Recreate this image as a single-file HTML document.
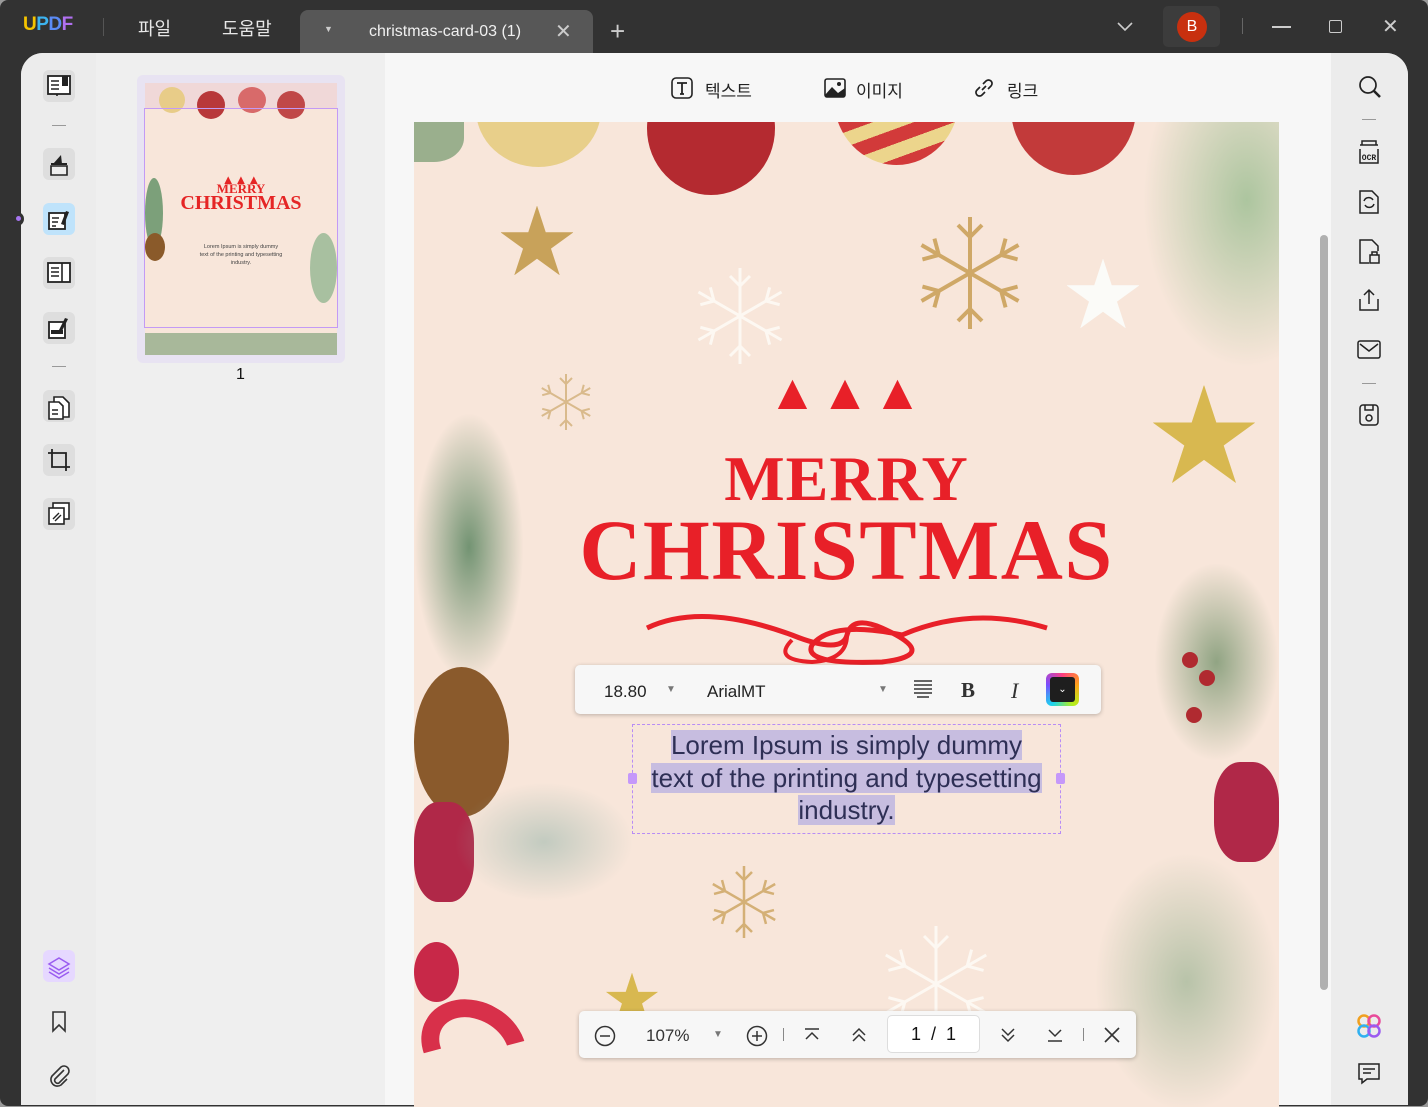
<!DOCTYPE html>
<html><head><meta charset="utf-8"><style>
*{margin:0;padding:0;box-sizing:border-box}
body{width:1428px;height:1107px;background:#9a9a9a;font-family:"Liberation Sans","Noto Sans CJK KR",sans-serif;position:relative;overflow:hidden}
.win{position:absolute;left:0;top:0;width:1428px;height:1106px;background:#323232;border-radius:8px 8px 8px 8px}
.abs{position:absolute}
.ic{position:absolute;width:32px;height:32px;border-radius:6px;background:#dedede}
.sep{position:absolute;width:14px;height:1px;background:#999}
svg{overflow:visible}
</style></head><body>
<div class="win"></div>
<!-- title bar -->
<div class="abs" style="left:23px;top:14px;font-weight:bold;font-size:19px;letter-spacing:-0.5px"><span style="color:#f5c400">U</span><span style="color:#3cb3f0">P</span><span style="color:#5b8bf5">D</span><span style="color:#b070f0">F</span></div>
<div class="abs" style="left:103px;top:18px;width:1px;height:18px;background:#555"></div>
<div class="abs" style="left:138px;top:15px;color:#e8e8e8;font-size:18px">파일</div>
<div class="abs" style="left:222px;top:15px;color:#e8e8e8;font-size:18px">도움말</div>
<div class="abs" style="left:300px;top:10px;width:293px;height:44px;background:#575757;border-radius:8px 8px 0 0"></div>
<div class="abs" style="left:324px;top:24px;color:#ccc;font-size:9px">▼</div>
<div class="abs" style="left:369px;top:23px;color:#f0f0f0;font-size:16px">christmas-card-03 (1)</div>
<div class="abs" style="left:555px;top:19px;color:#ccc;font-size:20px">✕</div>
<div class="abs" style="left:610px;top:16px;color:#ccc;font-size:26px;font-weight:300">+</div>
<svg class="abs" style="left:1117px;top:22px" width="16" height="10"><path d="M1 1 L8 8 L15 1" stroke="#ccc" stroke-width="1.6" fill="none"/></svg>
<div class="abs" style="left:1163px;top:6px;width:57px;height:41px;background:#3c3c3c;border-radius:5px"></div>
<div class="abs" style="left:1177px;top:12px;width:30px;height:30px;border-radius:50%;background:#c8300f;color:#fff;font-size:16px;text-align:center;line-height:30px">B</div>
<div class="abs" style="left:1242px;top:18px;width:1px;height:16px;background:#666"></div>
<div class="abs" style="left:1272px;top:26px;width:19px;height:1.5px;background:#ccc"></div>
<div class="abs" style="left:1329px;top:20px;width:13px;height:13px;border:1.5px solid #ccc;border-radius:2px"></div>
<div class="abs" style="left:1382px;top:14px;color:#ccc;font-size:20px">✕</div>

<!-- main content -->
<div class="abs" style="left:21px;top:53px;width:1387px;height:1052px;background:#f7f7f7;border-radius:22px 22px 0 0;overflow:hidden">
 <div class="abs" style="left:0;top:0;width:75px;height:1052px;background:#ececec"></div>
 <div class="abs" style="left:75px;top:0;width:289px;height:1052px;background:#efefef"></div>
 <div class="abs" style="left:1310px;top:0;width:77px;height:1052px;background:#ececec"></div>
</div>
<div class="abs" style="left:16px;top:212px;width:8px;height:14px;background:#323232;border-radius:0 8px 8px 0"></div>
<div class="abs" style="left:16px;top:216px;width:5px;height:5px;border-radius:50%;background:#a675f0"></div>

<!-- left icons -->
<div class="ic" style="left:43px;top:70px"></div>
<svg class="abs" style="left:47px;top:75px" width="24" height="22"><rect x="1" y="1" width="22" height="18" fill="#fff" stroke="#222" stroke-width="1.8"/><rect x="15" y="1" width="6" height="10" fill="#222"/><path d="M4 6h8M4 10h8M4 14h8M10 19v2" stroke="#222" stroke-width="1.6"/></svg>
<div class="sep" style="left:52px;top:125px"></div>
<div class="ic" style="left:43px;top:148px"></div>
<svg class="abs" style="left:48px;top:152px" width="22" height="24"><path d="M5 12 L13 3 L14 12 Z" fill="#222"/><path d="M3 14h16v9H3z" fill="#eee" stroke="#222" stroke-width="1.6"/><path d="M3 12h16" stroke="#222" stroke-width="2"/></svg>
<div class="ic" style="left:43px;top:203px;background:#bfe3fb"></div>
<svg class="abs" style="left:47px;top:207px" width="24" height="24"><rect x="2" y="6" width="16" height="16" fill="#fff" stroke="#222" stroke-width="1.8"/><path d="M5 11h7M5 15h6M5 19h4" stroke="#222" stroke-width="1.6"/><path d="M14 17 L19 4 L22 5 L17 18 Z" fill="#222"/></svg>
<div class="ic" style="left:43px;top:257px"></div>
<svg class="abs" style="left:47px;top:262px" width="24" height="22"><rect x="1" y="1" width="22" height="19" fill="#fff" stroke="#222" stroke-width="1.8"/><path d="M15 1v19M4 6h8M4 10h8M4 14h8" stroke="#222" stroke-width="1.6"/></svg>
<div class="ic" style="left:43px;top:312px"></div>
<svg class="abs" style="left:47px;top:316px" width="24" height="24"><rect x="2" y="6" width="16" height="16" fill="#fff" stroke="#222" stroke-width="1.8"/><rect x="4" y="14" width="12" height="4" fill="#222"/><path d="M12 14 L18 2 L21 3 L15 15 Z" fill="#222"/></svg>
<div class="sep" style="left:52px;top:366px"></div>
<div class="ic" style="left:43px;top:390px"></div>
<svg class="abs" style="left:48px;top:396px" width="22" height="24"><path d="M6 1h9l6 6v14H6z" fill="#fff" stroke="#222" stroke-width="1.6"/><path d="M1 6h10l4 4v13H1z" fill="#fff" stroke="#222" stroke-width="1.6"/><path d="M4 14h6M4 18h6" stroke="#222" stroke-width="1.4"/></svg>
<div class="ic" style="left:43px;top:444px"></div>
<svg class="abs" style="left:47px;top:448px" width="24" height="24"><path d="M5 1v18h18M1 5h18v18" stroke="#222" stroke-width="1.8" fill="none"/></svg>
<div class="ic" style="left:43px;top:498px"></div>
<svg class="abs" style="left:47px;top:502px" width="24" height="24"><rect x="6" y="1" width="16" height="16" fill="#fff" stroke="#222" stroke-width="1.6"/><rect x="2" y="6" width="15" height="16" fill="#fff" stroke="#222" stroke-width="1.6"/><path d="M6 17l6-6M8 19l6-6" stroke="#222" stroke-width="1.4"/></svg>
<div class="ic" style="left:43px;top:950px;background:#e6d8ff"></div>
<svg class="abs" style="left:48px;top:956px" width="22" height="22"><path d="M11 2 L21 8 L11 14 L1 8 Z" fill="none" stroke="#9a5cf0" stroke-width="1.5"/><path d="M1 12l10 6 10-6M1 16l10 6 10-6" fill="none" stroke="#9a5cf0" stroke-width="1.5"/></svg>
<svg class="abs" style="left:51px;top:1011px" width="16" height="22"><path d="M2 1h12v19l-6-6-6 6z" fill="none" stroke="#333" stroke-width="1.6"/></svg>
<svg class="abs" style="left:49px;top:1064px" width="22" height="24"><path d="M15 6 L6 15 a3 3 0 0 0 4 4 L19 10 a5 5 0 0 0 -7 -7 L3 12 a6.5 6.5 0 0 0 9 9 L18 15" fill="none" stroke="#333" stroke-width="1.6"/></svg>

<!-- thumbnail -->
<div class="abs" style="left:137px;top:75px;width:208px;height:288px;background:#e8e3f2;border-radius:6px"></div>
<div class="abs" style="left:145px;top:83px;width:192px;height:272px;background:#f8e6da;overflow:hidden">
 <div class="abs" style="left:0;top:0;width:192px;height:26px;background:#f0d8d8"></div>
 <div class="abs" style="left:14px;top:4px;width:26px;height:26px;border-radius:50%;background:#e8cc88"></div>
 <div class="abs" style="left:52px;top:8px;width:28px;height:28px;border-radius:50%;background:#b8383a"></div>
 <div class="abs" style="left:93px;top:4px;width:28px;height:26px;border-radius:50%;background:#d86a6a"></div>
 <div class="abs" style="left:132px;top:8px;width:28px;height:28px;border-radius:50%;background:#c04848"></div>
 <div class="abs" style="left:0;top:95px;width:18px;height:70px;background:#7ca07a;border-radius:50%"></div>
 <div class="abs" style="left:0;top:150px;width:20px;height:28px;background:#8a5a2a;border-radius:50%"></div>
 <div class="abs" style="left:165px;top:150px;width:27px;height:70px;background:#a8c0a0;border-radius:50%"></div>
 <div class="abs" style="left:0;top:250px;width:192px;height:22px;background:#a8b89a"></div>
 <div class="abs" style="left:0;top:89px;width:192px;text-align:center;color:#e52525;font-family:'Liberation Serif',serif;font-weight:bold;font-size:13px">▲▲▲</div>
 <div class="abs" style="left:0;top:98px;width:192px;text-align:center;color:#e52525;font-family:'Liberation Serif',serif;font-weight:bold;font-size:13px">MERRY</div>
 <div class="abs" style="left:0;top:109px;width:192px;text-align:center;color:#e52525;font-family:'Liberation Serif',serif;font-weight:bold;font-size:20px">CHRISTMAS</div>
 <div class="abs" style="left:0;top:160px;width:192px;text-align:center;color:#444;font-size:5.5px;line-height:8px">Lorem Ipsum is simply dummy<br>text of the printing and typesetting<br>industry.</div>
</div>
<div class="abs" style="left:144px;top:108px;width:194px;height:220px;border:1.5px solid #c39af5"></div>
<div class="abs" style="left:236px;top:366px;font-size:16px;color:#111">1</div>

<!-- top tools -->
<svg class="abs" style="left:671px;top:77px" width="22" height="22"><rect x="1" y="1" width="20" height="20" rx="4" fill="none" stroke="#222" stroke-width="1.6"/><path d="M6 6h10M11 6v11M9 17h4" stroke="#222" stroke-width="1.8"/></svg>
<div class="abs" style="left:705px;top:77px;font-size:17px;color:#222">텍스트</div>
<svg class="abs" style="left:824px;top:78px" width="22" height="20"><rect x="1" y="1" width="20" height="18" rx="2" fill="none" stroke="#222" stroke-width="1.6"/><path d="M1 17 L8 9 L14 15 L21 10 V19 H1Z" fill="#222"/><circle cx="15" cy="6" r="2" fill="#222"/></svg>
<div class="abs" style="left:856px;top:77px;font-size:17px;color:#222">이미지</div>
<svg class="abs" style="left:973px;top:77px" width="22" height="22"><path d="M9 13 L13 9 M7 10 L4 13 a3.5 3.5 0 0 0 5 5 L12 15 M10 7 L13 4 a3.5 3.5 0 0 1 5 5 L15 12" fill="none" stroke="#222" stroke-width="1.7"/></svg>
<div class="abs" style="left:1007px;top:77px;font-size:17px;color:#222">링크</div>

<!-- page -->
<div class="abs" style="left:414px;top:122px;width:865px;height:985px;background:#f8e6da;overflow:hidden">
 <!-- ornaments -->
 <div class="abs" style="left:62px;top:-70px;width:125px;height:115px;border-radius:50%;background:#e8cf8a"></div>
 <div class="abs" style="left:233px;top:-60px;width:128px;height:133px;border-radius:50%;background:#b42a30"></div>
 <div class="abs" style="left:420px;top:-90px;width:125px;height:133px;border-radius:50%;background:repeating-linear-gradient(160deg,#d23a3a 0 14px,#ecd58c 14px 28px)"></div>
 <div class="abs" style="left:597px;top:-80px;width:125px;height:133px;border-radius:50%;background:#c23a3a"></div>
 <div class="abs" style="left:0;top:0;width:50px;height:40px;background:#5c8a5a;border-radius:0 0 60% 0;opacity:.6"></div>
 <div class="abs" style="left:720px;top:0;width:150px;height:260px;background:radial-gradient(ellipse at 75% 30%,rgba(110,170,110,.55),rgba(110,170,110,0) 65%)"></div>
 <!-- stars -->
 <div class="abs" style="left:84px;top:82px;color:#c8a25a;font-size:78px;line-height:1">★</div>
 <div class="abs" style="left:650px;top:135px;color:#fbfbf8;font-size:78px;line-height:1">★</div>
 <div class="abs" style="left:735px;top:262px;color:#d8b850;font-size:110px;line-height:1">★</div>
 <div class="abs" style="left:190px;top:850px;color:#d8b850;font-size:56px;line-height:1">★</div>
 <!-- snowflakes (line) -->
 <svg class="abs" style="left:326px;top:194px" width="2" height="2"><g stroke="#fdf8f2" stroke-width="3" fill="none">
  <g><path d="M0 -48V48M0 -30l-10 -10M0 -30l10 -10M0 30l-10 10M0 30l10 10"/></g>
  <g transform="rotate(60)"><path d="M0 -48V48M0 -30l-10 -10M0 -30l10 -10M0 30l-10 10M0 30l10 10"/></g>
  <g transform="rotate(120)"><path d="M0 -48V48M0 -30l-10 -10M0 -30l10 -10M0 30l-10 10M0 30l10 10"/></g></g></svg>
 <svg class="abs" style="left:556px;top:151px" width="2" height="2"><g stroke="#cfa867" stroke-width="4" fill="none">
  <g><path d="M0 -56V56M0 -36l-12 -12M0 -36l12 -12M0 36l-12 12M0 36l12 12"/></g>
  <g transform="rotate(60)"><path d="M0 -56V56M0 -36l-12 -12M0 -36l12 -12M0 36l-12 12M0 36l12 12"/></g>
  <g transform="rotate(120)"><path d="M0 -56V56M0 -36l-12 -12M0 -36l12 -12M0 36l-12 12M0 36l12 12"/></g></g></svg>
 <svg class="abs" style="left:152px;top:280px" width="2" height="2"><g stroke="#d9ba8c" stroke-width="2" fill="none">
  <g><path d="M0 -28V28M0 -18l-6 -6M0 -18l6 -6M0 18l-6 6M0 18l6 6"/></g>
  <g transform="rotate(60)"><path d="M0 -28V28M0 -18l-6 -6M0 -18l6 -6M0 18l-6 6M0 18l6 6"/></g>
  <g transform="rotate(120)"><path d="M0 -28V28M0 -18l-6 -6M0 -18l6 -6M0 18l-6 6M0 18l6 6"/></g></g></svg>
 <svg class="abs" style="left:330px;top:780px" width="2" height="2"><g stroke="#d4b076" stroke-width="2.5" fill="none">
  <g><path d="M0 -36V36M0 -22l-8 -8M0 -22l8 -8M0 22l-8 8M0 22l8 8"/></g>
  <g transform="rotate(60)"><path d="M0 -36V36M0 -22l-8 -8M0 -22l8 -8M0 22l-8 8M0 22l8 8"/></g>
  <g transform="rotate(120)"><path d="M0 -36V36M0 -22l-8 -8M0 -22l8 -8M0 22l-8 8M0 22l8 8"/></g></g></svg>
 <svg class="abs" style="left:522px;top:862px" width="2" height="2"><g stroke="#fdf8f2" stroke-width="3" fill="none">
  <g><path d="M0 -58V58M0 -36l-12 -12M0 -36l12 -12M0 36l-12 12M0 36l12 12"/></g>
  <g transform="rotate(60)"><path d="M0 -58V58M0 -36l-12 -12M0 -36l12 -12M0 36l-12 12M0 36l12 12"/></g>
  <g transform="rotate(120)"><path d="M0 -58V58M0 -36l-12 -12M0 -36l12 -12M0 36l-12 12M0 36l12 12"/></g></g></svg>
 <!-- left foliage -->
 <div class="abs" style="left:0;top:290px;width:110px;height:270px;background:radial-gradient(ellipse,rgba(70,120,80,.75),rgba(70,120,80,0) 70%)"></div>
 <div class="abs" style="left:0;top:545px;width:95px;height:150px;border-radius:50%;background:#8a5a2c"></div>
 <div class="abs" style="left:0;top:680px;width:60px;height:100px;background:#b02848;border-radius:40%"></div>
 <div class="abs" style="left:40px;top:660px;width:180px;height:120px;background:radial-gradient(ellipse,rgba(150,180,170,.55),rgba(150,180,170,0) 70%)"></div>
 <div class="abs" style="left:0;top:820px;width:45px;height:60px;border-radius:50%;background:#c82848"></div>
 <div class="abs" style="left:5px;top:880px;width:110px;height:90px;border:18px solid #d8304a;border-color:#d8304a transparent transparent #d8304a;border-radius:50%;transform:rotate(30deg)"></div>
 <!-- right foliage -->
 <div class="abs" style="left:740px;top:440px;width:125px;height:200px;background:radial-gradient(ellipse,rgba(60,110,60,.55),rgba(60,110,60,0) 70%)"></div>
 <div class="abs" style="left:800px;top:640px;width:65px;height:100px;background:#b02848;border-radius:40%"></div>
 <div class="abs" style="left:680px;top:730px;width:185px;height:260px;background:radial-gradient(ellipse,rgba(120,160,120,.5),rgba(120,160,120,0) 70%)"></div>
 <div class="abs" style="left:768px;top:530px;width:16px;height:16px;border-radius:50%;background:#b02a30"></div>
 <div class="abs" style="left:785px;top:548px;width:16px;height:16px;border-radius:50%;background:#b02a30"></div>
 <div class="abs" style="left:772px;top:585px;width:16px;height:16px;border-radius:50%;background:#b02a30"></div>
 <!-- title -->
 <div class="abs" style="left:0;top:245px;width:865px;text-align:center;color:#e82028;font-size:50px;line-height:1;letter-spacing:3px">▲▲▲</div>
 <div class="abs" style="left:0;top:325px;width:865px;text-align:center;color:#e82028;font-family:'Liberation Serif',serif;font-weight:bold;font-size:64px;line-height:1;letter-spacing:1px">MERRY</div>
 <div class="abs" style="left:0;top:385px;width:865px;text-align:center;color:#e82028;font-family:'Liberation Serif',serif;font-weight:bold;font-size:86px;line-height:1;letter-spacing:1.5px">CHRISTMAS</div>
 <svg class="abs" style="left:228px;top:488px" width="410" height="55"><path d="M5 18 Q60 -8 150 25 Q200 45 205 25 Q210 5 240 18 Q300 45 240 52 Q160 55 170 35 Q190 10 260 25 Q330 -5 405 18" fill="none" stroke="#e82028" stroke-width="5"/><path d="M205 25 Q205 50 170 52 Q130 50 150 30" fill="none" stroke="#e82028" stroke-width="4"/></svg>
 <!-- text box -->
 <div class="abs" style="left:218px;top:602px;width:429px;height:110px;border:1.5px dashed #b88cf5"></div>
 <div class="abs" style="left:214px;top:651px;width:9px;height:11px;background:#c598fa;border-radius:2px"></div>
 <div class="abs" style="left:642px;top:651px;width:9px;height:11px;background:#c598fa;border-radius:2px"></div>
 <div class="abs" style="left:218px;top:607px;width:429px;text-align:center;font-size:26px;line-height:32.5px;color:#2e2f55"><span style="background:#c7bde0">Lorem Ipsum is simply dummy </span><br><span style="background:#c7bde0">text of the printing and typesetting</span><br><span style="background:#c7bde0">industry.</span></div>
</div>

<!-- font toolbar -->
<div class="abs" style="left:575px;top:665px;width:526px;height:49px;background:#f7f7f7;border-radius:5px;box-shadow:0 1px 4px rgba(0,0,0,.25)"></div>
<div class="abs" style="left:604px;top:682px;font-size:17px;color:#222">18.80</div>
<div class="abs" style="left:666px;top:684px;font-size:10px;color:#777">▼</div>
<div class="abs" style="left:707px;top:682px;font-size:17px;color:#222">ArialMT</div>
<div class="abs" style="left:878px;top:684px;font-size:10px;color:#777">▼</div>
<svg class="abs" style="left:913px;top:680px" width="20" height="18"><path d="M1 1h18M1 5h18M1 9h18M1 13h18M4 17h12" stroke="#333" stroke-width="1.4"/></svg>
<div class="abs" style="left:961px;top:678px;font-family:'Liberation Serif',serif;font-weight:bold;font-size:21px;color:#333">B</div>
<div class="abs" style="left:1011px;top:678px;font-family:'Liberation Serif',serif;font-style:italic;font-size:22px;color:#333">I</div>
<div class="abs" style="left:1046px;top:673px;width:33px;height:33px;border-radius:6px;background:conic-gradient(#ff3d7f,#ffa21a,#b6ef1b,#1bd3ef,#7a4dff,#ff3d7f)"></div>
<div class="abs" style="left:1050px;top:677px;width:25px;height:25px;border-radius:3px;background:#1e1e1e;color:#fff;font-size:10px;text-align:center;line-height:25px">⌄</div>

<!-- bottom toolbar -->
<div class="abs" style="left:579px;top:1011px;width:557px;height:47px;background:#f7f7f7;border-radius:5px;box-shadow:0 1px 4px rgba(0,0,0,.25)"></div>
<svg class="abs" style="left:594px;top:1025px" width="22" height="22"><circle cx="11" cy="11" r="9.5" fill="none" stroke="#333" stroke-width="1.5"/><path d="M6 11h10" stroke="#333" stroke-width="1.5"/></svg>
<div class="abs" style="left:646px;top:1026px;font-size:17px;color:#333">107%</div>
<div class="abs" style="left:713px;top:1029px;font-size:10px;color:#777">▼</div>
<svg class="abs" style="left:746px;top:1025px" width="22" height="22"><circle cx="11" cy="11" r="9.5" fill="none" stroke="#333" stroke-width="1.5"/><path d="M6 11h10M11 6v10" stroke="#333" stroke-width="1.5"/></svg>
<div class="abs" style="left:783px;top:1028px;width:1px;height:13px;background:#888"></div>
<svg class="abs" style="left:803px;top:1028px" width="18" height="14"><path d="M2 1h14M3 11l6-6 6 6" fill="none" stroke="#333" stroke-width="1.5"/></svg>
<svg class="abs" style="left:850px;top:1026px" width="18" height="18"><path d="M3 9l6-6 6 6M3 15l6-6 6 6" fill="none" stroke="#333" stroke-width="1.5"/></svg>
<div class="abs" style="left:887px;top:1015px;width:93px;height:38px;background:#fff;border:1px solid #ddd;border-radius:5px;text-align:center;font-size:18px;line-height:37px;color:#111">1&nbsp;&nbsp;/&nbsp;&nbsp;1</div>
<svg class="abs" style="left:999px;top:1026px" width="18" height="18"><path d="M3 3l6 6 6-6M3 9l6 6 6-6" fill="none" stroke="#333" stroke-width="1.5"/></svg>
<svg class="abs" style="left:1046px;top:1027px" width="18" height="16"><path d="M3 3l6 6 6-6M2 14h14" fill="none" stroke="#333" stroke-width="1.5"/></svg>
<div class="abs" style="left:1083px;top:1028px;width:1px;height:13px;background:#888"></div>
<svg class="abs" style="left:1103px;top:1026px" width="18" height="18"><path d="M2 2l14 14M16 2L2 16" stroke="#333" stroke-width="1.6"/></svg>

<!-- scrollbar -->
<div class="abs" style="left:1320px;top:235px;width:8px;height:755px;background:#b0b0b0;border-radius:4px"></div>

<!-- right icons -->
<svg class="abs" style="left:1358px;top:75px" width="24" height="24"><circle cx="10" cy="10" r="8" fill="none" stroke="#222" stroke-width="1.7"/><path d="M16 16l6 6" stroke="#222" stroke-width="2.6"/></svg>
<div class="sep" style="left:1362px;top:119px"></div>
<svg class="abs" style="left:1356px;top:140px" width="26" height="26"><path d="M4 5h18M6 5V1h14v4M4 9v14h18V9" fill="none" stroke="#222" stroke-width="1.5"/><text x="13" y="20" font-size="8" font-family="Liberation Mono" text-anchor="middle" font-weight="bold" fill="#222">OCR</text></svg>
<svg class="abs" style="left:1358px;top:190px" width="22" height="24"><path d="M2 1h12l6 6v16H2z" fill="none" stroke="#222" stroke-width="1.5"/><path d="M6 11a5 5 0 0 1 9-1M16 14a5 5 0 0 1-9 1" fill="none" stroke="#222" stroke-width="1.5"/></svg>
<svg class="abs" style="left:1358px;top:239px" width="22" height="26"><path d="M11 24H2V1h12l6 6v5" fill="none" stroke="#222" stroke-width="1.5"/><rect x="12" y="16" width="9" height="8" fill="none" stroke="#222" stroke-width="1.5"/><path d="M14 16v-3h5v3" fill="none" stroke="#222" stroke-width="1.5"/></svg>
<svg class="abs" style="left:1358px;top:288px" width="22" height="24"><path d="M11 2v14M6 7l5-5 5 5M2 11v11h18V11" fill="none" stroke="#222" stroke-width="1.5"/></svg>
<svg class="abs" style="left:1357px;top:340px" width="24" height="20"><rect x="1" y="1" width="22" height="17" rx="2" fill="none" stroke="#222" stroke-width="1.5"/><path d="M3 4l9 7 9-7" fill="none" stroke="#222" stroke-width="1.5"/></svg>
<div class="sep" style="left:1362px;top:383px"></div>
<svg class="abs" style="left:1359px;top:404px" width="20" height="22"><rect x="1" y="1" width="18" height="20" rx="3" fill="none" stroke="#222" stroke-width="1.5"/><path d="M6 1v5h8V1" fill="none" stroke="#222" stroke-width="1.5"/><circle cx="10" cy="14" r="3" fill="none" stroke="#222" stroke-width="1.5"/></svg>
<svg class="abs" style="left:1356px;top:1013px" width="26" height="26"><circle cx="8" cy="8" r="5.5" fill="none" stroke="#f0a020" stroke-width="2.5"/><circle cx="18" cy="8" r="5.5" fill="none" stroke="#e84a9a" stroke-width="2.5"/><circle cx="8" cy="18" r="5.5" fill="none" stroke="#30b0f0" stroke-width="2.5"/><circle cx="18" cy="18" r="5.5" fill="none" stroke="#9a5cf0" stroke-width="2.5"/></svg>
<svg class="abs" style="left:1358px;top:1063px" width="22" height="22"><path d="M1 1h20v15H9l-5 4v-4H1z" fill="none" stroke="#222" stroke-width="1.5"/><path d="M5 6h12M5 10h8" stroke="#222" stroke-width="1.4"/></svg>
</body></html>
